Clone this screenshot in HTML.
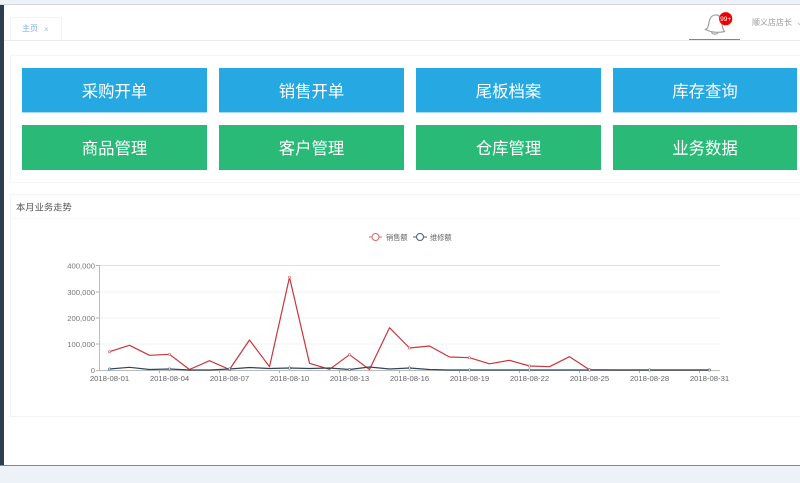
<!DOCTYPE html>
<html lang="zh">
<head>
<meta charset="utf-8">
<title>主页</title>
<style>
html,body{margin:0;padding:0}
body{width:800px;height:483px;overflow:hidden;position:relative;background:#fff;font-family:"Liberation Sans","Noto Sans CJK SC",sans-serif}
div{position:absolute;box-sizing:border-box}
.b{height:45px;width:185px;color:#fff;font-size:16.4px;line-height:45px;text-align:center;font-family:"WenQuanYi Zen Hei","Noto Sans CJK SC",sans-serif;filter:blur(.2px)}
.blue{background:#26a9e3;top:68px;height:44.5px;border-bottom:1px solid #a8d9f0}
.green{background:#2aba78;top:125px}
svg{position:absolute;left:0;top:0}
svg text{font-family:"Liberation Sans","Noto Sans CJK SC",sans-serif;filter:blur(.25px)}
</style>
</head>
<body>
<div style="left:0;top:0;width:800px;height:4px;background:#edf1f8"></div>
<div style="left:0;top:4px;width:800px;height:1px;background:#d4d6d9"></div>
<div style="left:0;top:5px;width:4px;height:460px;background:#2c3e50"></div>

<div style="left:10px;top:17px;width:52px;height:24px;border:1px solid #f2f4f7;border-bottom:none;background:#fff"></div>
<div style="left:22px;top:23px;font-size:8px;line-height:12px;color:#7fb2ee;white-space:nowrap;filter:blur(.2px)">主页</div>
<div style="left:44px;top:24px;font-size:8px;line-height:12px;color:#a9bcd8">×</div>
<div style="left:4px;top:40px;width:796px;height:1px;background:#ececec"></div>

<div style="left:689px;top:39px;width:51px;height:1px;background:#4a90e2"></div>
<svg width="800" height="483" viewBox="0 0 800 483">
<path d="M705.5 29.5 C708.5 28.5 708.5 24 709.5 20.5 C710.5 16.5 713.5 14.5 716.5 15 C720 15.6 722 18.5 722 22 C722 26 722.5 29 724.5 31.5 C719 33 711 32.5 705.5 29.5 Z M711.5 31.8 C712 34.5 716.5 35 718 32.5" fill="none" stroke="#a0a0a0" stroke-width="1.2"/>
<circle cx="725.7" cy="18.7" r="6.6" fill="#f00000"/>
<text x="725.7" y="21" font-size="6.6" fill="#fff" text-anchor="middle">99+</text>
<text x="752" y="25" font-size="8" fill="#999">顺义店店长</text>
<path d="M798 23 l1.5 1.5 l1.5 -1.5" fill="none" stroke="#bbb" stroke-width=".8"/>

<rect x="10.5" y="55.5" width="800" height="127" fill="#fff" stroke="#f4f5f8"/>
<rect x="10.5" y="194.5" width="800" height="222" fill="#fff" stroke="#f1f3f8"/>
<line x1="10" x2="800" y1="218.5" y2="218.5" stroke="#f6f7fa"/>
<text x="16" y="210.5" font-size="9.3" fill="#555">本月业务走势</text>

<g stroke="#f0f0f0" stroke-width="1">
<line x1="99.5" x2="720" y1="292" y2="292"/>
<line x1="99.5" x2="720" y1="318" y2="318"/>
<line x1="99.5" x2="720" y1="344" y2="344"/>
</g>
<line x1="99.5" x2="720" y1="265.5" y2="265.5" stroke="#e0e0e0"/>
<line x1="99.5" x2="99.5" y1="265" y2="370" stroke="#bcbcbc"/>
<line x1="96" x2="720" y1="370.5" y2="370.5" stroke="#bcbcbc"/>
<g stroke="#b0b0b0">
<line x1="96" x2="99" y1="265.5" y2="265.5"/><line x1="96" x2="99" y1="292" y2="292"/><line x1="96" x2="99" y1="318" y2="318"/><line x1="96" x2="99" y1="344" y2="344"/>
<path d="M159.5 370v3M219.5 370v3M279.5 370v3M339.5 370v3M399.5 370v3M459.5 370v3M519.5 370v3M579.5 370v3M639.5 370v3M699.5 370v3"/>
</g>
<g font-size="7.7" fill="#777" text-anchor="end">
<text x="95" y="268.5">400,000</text><text x="95" y="294.8">300,000</text><text x="95" y="320.8">200,000</text><text x="95" y="346.8">100,000</text><text x="95" y="373">0</text>
</g>
<g font-size="7.7" fill="#666" text-anchor="middle">
<text x="109.5" y="380.8">2018-08-01</text><text x="169.5" y="380.8">2018-08-04</text><text x="229.5" y="380.8">2018-08-07</text><text x="289.5" y="380.8">2018-08-10</text><text x="349.5" y="380.8">2018-08-13</text><text x="409.5" y="380.8">2018-08-16</text><text x="469.5" y="380.8">2018-08-19</text><text x="529.5" y="380.8">2018-08-22</text><text x="589.5" y="380.8">2018-08-25</text><text x="649.5" y="380.8">2018-08-28</text><text x="709.5" y="380.8">2018-08-31</text>
</g>

<polyline fill="none" stroke="#c9353a" stroke-width="1.2" stroke-linejoin="round" points="109.5,351.7 129.5,345.3 149.5,355.3 169.5,354.3 189.5,369.5 209.5,360.7 229.5,369.5 249.5,340 269.5,366.7 289.5,277.3 309.5,363.3 329.5,369.3 349.5,354.7 369.5,369.5 389.5,327.7 409.5,348 429.5,346 449.5,357 469.5,357.7 489.5,363.8 509.5,360.3 529.5,366 549.5,366.7 569.5,356.7 589.5,369.7 609.5,370 709.5,370"/>
<polyline fill="none" stroke="#2f4558" stroke-width="1.2" stroke-linejoin="round" points="109.5,369 129.5,367.3 149.5,369.5 169.5,369 189.5,370 209.5,370 229.5,369 249.5,367.5 269.5,368.5 289.5,368 309.5,368.5 329.5,368 349.5,369.5 369.5,367 389.5,369 409.5,368 429.5,369.5 449.5,370 709.5,370"/>
<g fill="#fff" stroke="#d9686c" stroke-width=".7">
<circle cx="109.5" cy="351.7" r="1.1"/><circle cx="169.5" cy="354.3" r="1.1"/><circle cx="229.5" cy="369.5" r="1.1"/><circle cx="289.5" cy="277.3" r="1.1"/><circle cx="349.5" cy="354.7" r="1.1"/><circle cx="409.5" cy="348" r="1.1"/><circle cx="469.5" cy="357.7" r="1.1"/><circle cx="529.5" cy="366" r="1.1"/><circle cx="589.5" cy="369.7" r="1.1"/>
</g>
<g fill="#fff" stroke="#5d6f80" stroke-width=".7">
<circle cx="109.5" cy="369" r="1.1"/><circle cx="169.5" cy="369" r="1.1"/><circle cx="229.5" cy="369" r="1.1"/><circle cx="289.5" cy="368" r="1.1"/><circle cx="349.5" cy="369.5" r="1.1"/><circle cx="409.5" cy="368" r="1.1"/><circle cx="469.5" cy="370" r="1.1"/><circle cx="529.5" cy="370" r="1.1"/><circle cx="589.5" cy="370" r="1.1"/><circle cx="649.5" cy="370" r="1.1"/><circle cx="709.5" cy="370" r="1.1"/>
</g>

<line x1="369" x2="382" y1="237" y2="237" stroke="#d9686c"/>
<circle cx="375.5" cy="237" r="3.5" fill="#fff" stroke="#d9686c"/>
<text x="386" y="240" font-size="7.2" fill="#666">销售额</text>
<line x1="413" x2="427" y1="237" y2="237" stroke="#4a5d70"/>
<circle cx="420" cy="237" r="3.5" fill="#fff" stroke="#4a5d70"/>
<text x="430" y="240" font-size="7.2" fill="#666">维修额</text>
</svg>

<div class="b blue" style="left:22px">采购开单</div>
<div class="b blue" style="left:219px">销售开单</div>
<div class="b blue" style="left:416px">尾板档案</div>
<div class="b blue" style="left:613px;width:184px">库存查询</div>
<div class="b green" style="left:22px">商品管理</div>
<div class="b green" style="left:219px">客户管理</div>
<div class="b green" style="left:416px">仓库管理</div>
<div class="b green" style="left:613px;width:184px">业务数据</div>

<div style="left:0;top:465px;width:800px;height:1px;background:#85888d"></div>
<div style="left:0;top:466px;width:800px;height:17px;background:#edf2f9"></div>
</body>
</html>
